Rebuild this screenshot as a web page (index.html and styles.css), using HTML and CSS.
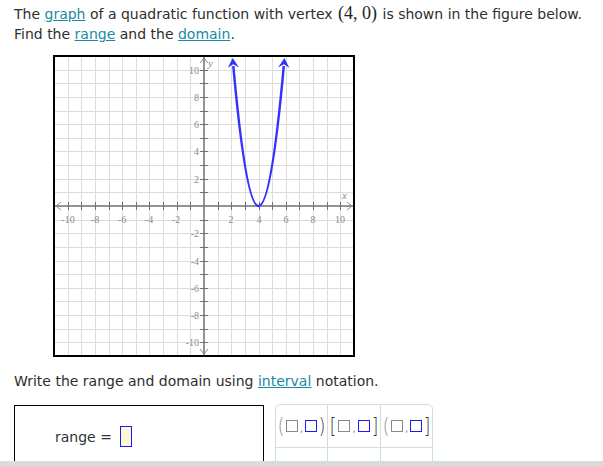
FILE: index.html
```html
<!DOCTYPE html>
<html>
<head>
<meta charset="utf-8">
<link rel="stylesheet" href="styles.css">
</head>
<body>
<div class="page">
  <p class="prompt">The <a class="lnk" href="#">graph</a> of a quadratic function with vertex <span class="math">(4, 0)</span> is shown in the figure below.<br>Find the <a class="lnk" href="#">range</a> and the <a class="lnk" href="#">domain</a>.</p>

  <svg class="graph" width="302" height="302" viewBox="0 0 302 302" xmlns="http://www.w3.org/2000/svg">
    <rect x="0" y="0" width="302" height="302" fill="#fff"/>
    <path stroke="#dcdcdc" stroke-width="1" fill="none" d="M15.5 2V300 M28.5 2V300 M42.5 2V300 M56.5 2V300 M69.5 2V300 M83.5 2V300 M96.5 2V300 M110.5 2V300 M124.5 2V300 M137.5 2V300 M165.5 2V300 M178.5 2V300 M192.5 2V300 M206.5 2V300 M219.5 2V300 M233.5 2V300 M246.5 2V300 M260.5 2V300 M274.5 2V300 M287.5 2V300
      M2 15.5H300 M2 28.5H300 M2 42.5H300 M2 56.5H300 M2 69.5H300 M2 83.5H300 M2 96.5H300 M2 110.5H300 M2 124.5H300 M2 137.5H300 M2 165.5H300 M2 178.5H300 M2 192.5H300 M2 206.5H300 M2 219.5H300 M2 233.5H300 M2 246.5H300 M2 260.5H300 M2 274.5H300 M2 287.5H300"/>
    <!-- axes -->
    <path stroke="#707070" stroke-width="1.5" fill="none" d="M2 151H300 M151 2V300"/>
    <!-- ticks -->
    <path stroke="#707070" stroke-width="1" fill="none" d="M15.5 147V155 M28.5 147V155 M42.5 147V155 M56.5 147V155 M69.5 147V155 M83.5 147V155 M96.5 147V155 M110.5 147V155 M124.5 147V155 M137.5 147V155 M165.5 147V155 M178.5 147V155 M192.5 147V155 M206.5 147V155 M219.5 147V155 M233.5 147V155 M246.5 147V155 M260.5 147V155 M274.5 147V155 M287.5 147V155
      M147 15.5H155 M147 28.5H155 M147 42.5H155 M147 56.5H155 M147 69.5H155 M147 83.5H155 M147 96.5H155 M147 110.5H155 M147 124.5H155 M147 137.5H155 M147 165.5H155 M147 178.5H155 M147 192.5H155 M147 206.5H155 M147 219.5H155 M147 233.5H155 M147 246.5H155 M147 260.5H155 M147 274.5H155 M147 287.5H155"/>
    <!-- axis arrows -->
    <path stroke="#8a8a8a" stroke-width="1" fill="none" d="M8 147L3 151L8 155 M294 147L299 151L294 155 M147 8L151 3L155 8 M147 294L151 299L155 294"/>
    <!-- labels -->
    <g class="tick" text-anchor="middle">
      <text x="15" y="168">-10</text>
      <text x="42" y="168">-8</text>
      <text x="69" y="168">-6</text>
      <text x="96" y="168">-4</text>
      <text x="123" y="168">-2</text>
      <text x="178" y="168">2</text>
      <text x="206" y="168">4</text>
      <text x="233" y="168">6</text>
      <text x="260" y="168">8</text>
      <text x="287" y="168">10</text>
    </g>
    <g class="tick" text-anchor="end">
      <text x="146" y="18.5">10</text>
      <text x="146" y="46">8</text>
      <text x="146" y="73">6</text>
      <text x="146" y="100">4</text>
      <text x="146" y="128">2</text>
      <text x="146" y="182">-2</text>
      <text x="146" y="210">-4</text>
      <text x="146" y="237">-6</text>
      <text x="146" y="264">-8</text>
      <text x="146" y="291">-10</text>
    </g>
    <text class="axlbl" x="155" y="12">y</text>
    <text class="axlbl" x="289" y="144">x</text>
    <!-- curve -->
    <path d="M180.32 10.99 Q205.55 291.01 230.77 10.99" stroke="#3333ff" stroke-width="2.5" fill="none"/>
    <path d="M179.7 3 L186 12.5 L180.2 9.2 L174.8 12.8 Z" fill="#3333ff"/>
    <path d="M231.4 3 L236.3 12.8 L230.9 9.2 L225.1 12.5 Z" fill="#3333ff"/>
    <rect x="1" y="1" width="300" height="300" fill="none" stroke="#000" stroke-width="2"/>
  </svg>

  <p class="instr">Write the range and domain using <a class="lnk" href="#">interval</a> notation.</p>

  <div class="answer-row">
    <div class="answer-box">
      <div class="answer-line">
        <span class="ans-label">range =</span>
        <span class="input"></span>
      </div>
    </div>
    <div class="palette">
      <div class="cell first">
        <span class="par gray">(</span><span class="sq"></span><span class="comma">,</span><span class="sq blue"></span><span class="par">)</span>
      </div>
      <div class="cell">
        <span class="par br">[</span><span class="sq"></span><span class="comma">,</span><span class="sq blue"></span><span class="par br">]</span>
      </div>
      <div class="cell last">
        <span class="par gray">(</span><span class="sq"></span><span class="comma">,</span><span class="sq blue"></span><span class="par br">]</span>
      </div>
      <div class="cell row2"></div>
      <div class="cell row2"></div>
      <div class="cell row2"></div>
    </div>
  </div>
</div>
<div class="bottombar"></div>
</body>
</html>
```
FILE: styles.css
```css
html, body {
  margin: 0;
  padding: 0;
  background: #fff;
}
body {
  font-family: "DejaVu Sans", Verdana, sans-serif;
  font-size: 14px;
  color: #2e2e2e;
  overflow: hidden;
  height: 466px;
}
.page {
  padding: 4px 0 0 14px;
}
.prompt, .instr {
  margin: 0;
  line-height: 20px;
}
.lnk {
  color: #1a8aa3;
  text-decoration: underline;
}
.math {
  font-family: "Liberation Serif", "DejaVu Serif", serif;
  font-size: 18px;
  line-height: 14px;
  color: #222;
  padding: 0 1px;
}
.graph {
  display: block;
  margin: 11px 0 0 39px;
}
.tick text, .tick {
  font-family: "Liberation Serif", serif;
  font-size: 10px;
  fill: #8a8a8a;
}
.axlbl {
  font-family: "Liberation Serif", serif;
  font-style: italic;
  font-size: 11px;
  fill: #8a8a8a;
}
.instr {
  margin-top: 14px;
}
.answer-row {
  display: flex;
  align-items: flex-start;
  margin-top: 14px;
}
.answer-box {
  width: 250px;
  height: 61px;
  border: 1px solid #000;
  box-sizing: border-box;
}
.answer-line {
  display: flex;
  align-items: center;
  padding: 20px 0 0 40px;
}
.ans-label {
  font-family: "DejaVu Sans", sans-serif;
  font-size: 14px;
  color: #333;
  margin-right: 8px;
}
.input {
  display: inline-block;
  width: 10px;
  height: 19px;
  background: #fdf8d4;
  border: 1px solid #1a1aff;
}
.palette {
  display: grid;
  grid-template-columns: 53px 53px 52px;
  grid-template-rows: 43px 15px;
  margin-left: 11px;
}
.cell {
  border: 1px solid #d3dcdc;
  box-sizing: border-box;
  display: flex;
  align-items: center;
  justify-content: center;
  gap: 1px;
  margin: -1px 0 0 -1px;
}
.cell.first { border-top-left-radius: 5px; margin-left: 0; }
.cell.last { border-top-right-radius: 5px; }
.cell.row2 { border-bottom: none; }
.cell:nth-child(4) { margin-left: 0; }
.par {
  font-family: "DejaVu Sans", sans-serif;
  font-size: 21px;
  line-height: 22px;
  font-weight: 200;
  color: #333;
  transform: scaleX(0.8);
}
.par.gray { color: #888; }
.sq {
  display: inline-block;
  width: 10px;
  height: 10px;
  border: 1px solid #888;
}
.sq.blue { border-color: #1a1aff; }
.comma {
  font-size: 10px;
  color: #888;
  margin: 4px 1px 0;
}
.bottombar {
  position: fixed;
  left: 0;
  right: 0;
  bottom: 0;
  height: 5px;
  background: #d5dddd;
}
```
